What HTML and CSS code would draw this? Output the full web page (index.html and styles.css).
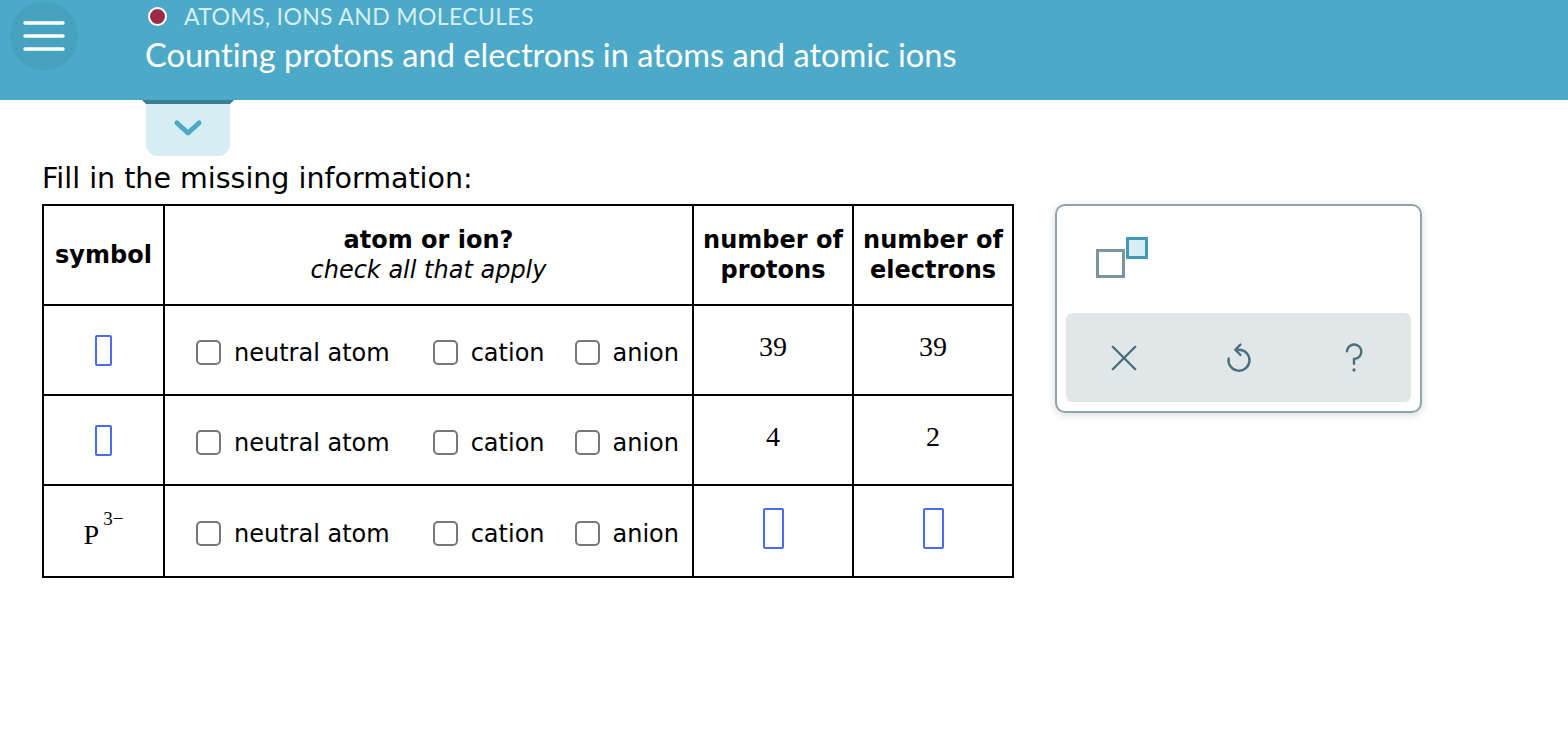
FILE: index.html
```html
<!DOCTYPE html>
<html lang="en">
<head>
<meta charset="utf-8">
<title>Counting protons and electrons</title>
<link rel="stylesheet" href="styles.css">
</head>
<body>
<header class="topbar">
  <button class="menu" aria-label="Menu">
    <svg width="44" height="32" viewBox="0 0 44 32"><g stroke="#fff" stroke-width="3.4" stroke-linecap="round"><line x1="3" y1="3" x2="41" y2="3"/><line x1="3" y1="16" x2="41" y2="16"/><line x1="3" y1="29" x2="41" y2="29"/></g></svg>
  </button>
  <div class="titles">
    <div class="category"><span class="dot"></span>ATOMS, IONS AND MOLECULES</div>
    <h1 class="title">Counting protons and electrons in atoms and atomic ions</h1>
  </div>
</header>
<div class="tabwrap">
  <div class="tabedge"></div>
  <div class="tab">
    <svg width="34" height="22" viewBox="0 0 34 22"><polyline points="6,5 17,15 28,5" fill="none" stroke="#4caac8" stroke-width="5" stroke-linecap="round" stroke-linejoin="round"/></svg>
  </div>
</div>
<main class="content">
  <p class="prompt">Fill in the missing information:</p>
  <div class="workarea">
    <table class="grid">
      <colgroup><col class="c-sym"><col class="c-kind"><col class="c-num"><col class="c-num"></colgroup>
      <thead>
        <tr>
          <th>symbol</th>
          <th><span class="hd">atom or ion?</span><span class="sub">check all that apply</span></th>
          <th>number of<br>protons</th>
          <th>number of<br>electrons</th>
        </tr>
      </thead>
      <tbody>
        <tr>
          <td><span class="blank"></span></td>
          <td>
            <div class="opts">
              <label class="opt"><span class="box"></span>neutral atom</label>
              <label class="opt"><span class="box"></span>cation</label>
              <label class="opt"><span class="box"></span>anion</label>
            </div>
          </td>
          <td class="num">39</td>
          <td class="num">39</td>
        </tr>
        <tr>
          <td><span class="blank"></span></td>
          <td>
            <div class="opts">
              <label class="opt"><span class="box"></span>neutral atom</label>
              <label class="opt"><span class="box"></span>cation</label>
              <label class="opt"><span class="box"></span>anion</label>
            </div>
          </td>
          <td class="num">4</td>
          <td class="num">2</td>
        </tr>
        <tr>
          <td class="sym">P<sup>3&minus;</sup></td>
          <td>
            <div class="opts">
              <label class="opt"><span class="box"></span>neutral atom</label>
              <label class="opt"><span class="box"></span>cation</label>
              <label class="opt"><span class="box"></span>anion</label>
            </div>
          </td>
          <td class="slot"><span class="blank tall"></span></td>
          <td class="slot"><span class="blank tall"></span></td>
        </tr>
      </tbody>
    </table>
    <aside class="palette">
      <div class="tools">
        <svg class="supicon" width="54" height="42" viewBox="0 0 54 42"><rect x="1.5" y="13.5" width="26" height="26" fill="#fff" stroke="#7d949c" stroke-width="3"/><rect x="31.5" y="1.5" width="19" height="19" fill="#d5edf3" stroke="#3f9ab4" stroke-width="3"/></svg>
      </div>
      <div class="actions">
        <svg width="36" height="36" viewBox="0 0 24 24"><g stroke="#4a6f7d" stroke-width="1.6" stroke-linecap="round" fill="none"><line x1="4.5" y1="4.5" x2="19.5" y2="19.5"/><line x1="19.5" y1="4.5" x2="4.5" y2="19.5"/></g></svg>
        <svg width="36" height="36" viewBox="0 0 24 24"><g stroke="#4a6f7d" stroke-width="1.6" stroke-linecap="round" stroke-linejoin="round" fill="none"><path d="M10 6.5 H12 A7 7 0 1 1 5.1 12.3"/><polyline points="13,3 9.5,6.5 13,10"/></g></svg>
        <svg width="36" height="36" viewBox="0 0 24 24"><g stroke="#4a6f7d" stroke-width="1.6" stroke-linecap="round" fill="none"><path d="M7.3 7.6 A4.8 4.8 0 1 1 12 12.6 V15.8"/></g><circle cx="12" cy="20" r="1.1" fill="#4a6f7d"/></svg>
      </div>
    </aside>
  </div>
</main>
</body>
</html>
```
FILE: styles.css
```css
* { box-sizing: border-box; }
body {
  margin: 0;
  background: #fff;
  font-family: "DejaVu Sans", Verdana, sans-serif;
  color: #000;
}
.topbar {
  height: 100px;
  background: #4caac8;
  display: flex;
  align-items: flex-start;
}
.menu {
  width: 68px;
  height: 68px;
  margin: 2px 0 0 10px;
  border: none;
  border-radius: 50%;
  background: #46a2bf;
  display: flex;
  align-items: center;
  justify-content: center;
  padding: 0;
}
.titles {
  margin-left: 67px;
  font-family: Lato, "Open Sans", sans-serif;
  font-variant-ligatures: none;
}
.category {
  display: flex;
  align-items: center;
  height: 32px;
  color: #d6eef5;
  font-size: 23px;
  letter-spacing: 0.35px;
}
.dot {
  width: 19px;
  height: 19px;
  border-radius: 50%;
  background: #9b2b4b;
  border: 2px solid #fff;
  margin: 0 17px 0 3px;
}
.title {
  margin: 2px 0 0;
  color: #fff;
  font-weight: 400;
  font-size: 32.6px;
  line-height: 42px;
}
.tabwrap {
  height: 56px;
}
.tabedge {
  width: 92px;
  height: 4px;
  margin-left: 142px;
  background: #3a7d91;
  clip-path: polygon(0 0, 100% 0, calc(100% - 4px) 100%, 4px 100%);
}
.tab {
  width: 84px;
  height: 52px;
  margin-left: 146px;
  background: #d5edf3;
  border-radius: 0 0 12px 12px;
  display: flex;
  align-items: center;
  justify-content: center;
  padding-bottom: 2px;
}
.content {
  padding-left: 42px;
}
.prompt {
  margin: 0;
  font-size: 28.5px;
  line-height: 45px;
  height: 49px;
}
.workarea {
  display: flex;
  align-items: flex-start;
  gap: 41px;
}
.grid {
  border-collapse: collapse;
  width: 971px;
  table-layout: fixed;
  font-size: 24px;
  margin-top: -1px;
}
.c-sym { width: 121px; }
.c-kind { width: 529px; }
.c-num { width: 160px; }
.grid th, .grid td {
  border: 2px solid #000;
  text-align: center;
  vertical-align: middle;
  padding: 0;
}
.grid thead tr { height: 100px; }
.grid tbody tr { height: 90px; }
.grid tbody tr:last-child { height: 92px; }
.grid th { font-weight: 700; line-height: 30px; }
.grid th .hd, .grid th .sub { display: block; }
.grid th .sub { font-weight: 400; font-style: italic; }
.blank {
  display: inline-block;
  width: 17px;
  height: 31px;
  border: 2px solid #4a6cf4;
  border-radius: 2px;
  vertical-align: middle;
}
.blank.tall { width: 21px; height: 41px; }
.grid td.slot { padding-bottom: 6px; }
.num {
  font-family: "Liberation Serif", "Times New Roman", serif;
  font-size: 28px;
}
.grid tbody td.num { padding-bottom: 6px; }
.sym {
  font-family: "Liberation Serif", "Times New Roman", serif;
  font-size: 28px;
}
.grid td.sym { padding-top: 8px; }
.sym sup { font-size: 19px; vertical-align: 19px; margin-left: 4px; line-height: 0; }
.opts {
  display: flex;
  justify-content: flex-start;
  gap: 30px;
  padding-left: 31px;
  padding-top: 5px;
}
.opt {
  display: flex;
  align-items: center;
  gap: 13px;
  white-space: nowrap;
}
.opt:first-child { margin-right: 13px; }
.box {
  width: 25px;
  height: 25px;
  border: 2px solid #777;
  border-radius: 5px;
  background: #fff;
}
.palette {
  width: 367px;
  height: 209px;
  margin-top: -1px;
  border: 2px solid #8fa3ab;
  border-radius: 10px;
  box-shadow: 0 2px 8px rgba(0,0,0,0.15);
  padding: 0 9px 9px;
  display: flex;
  flex-direction: column;
}
.tools {
  height: 107px;
  padding: 31px 0 0 30px;
}
.actions {
  flex: 1;
  background: #e1e6e9;
  border-radius: 6px;
  display: flex;
  align-items: center;
  justify-content: space-around;
}
```
